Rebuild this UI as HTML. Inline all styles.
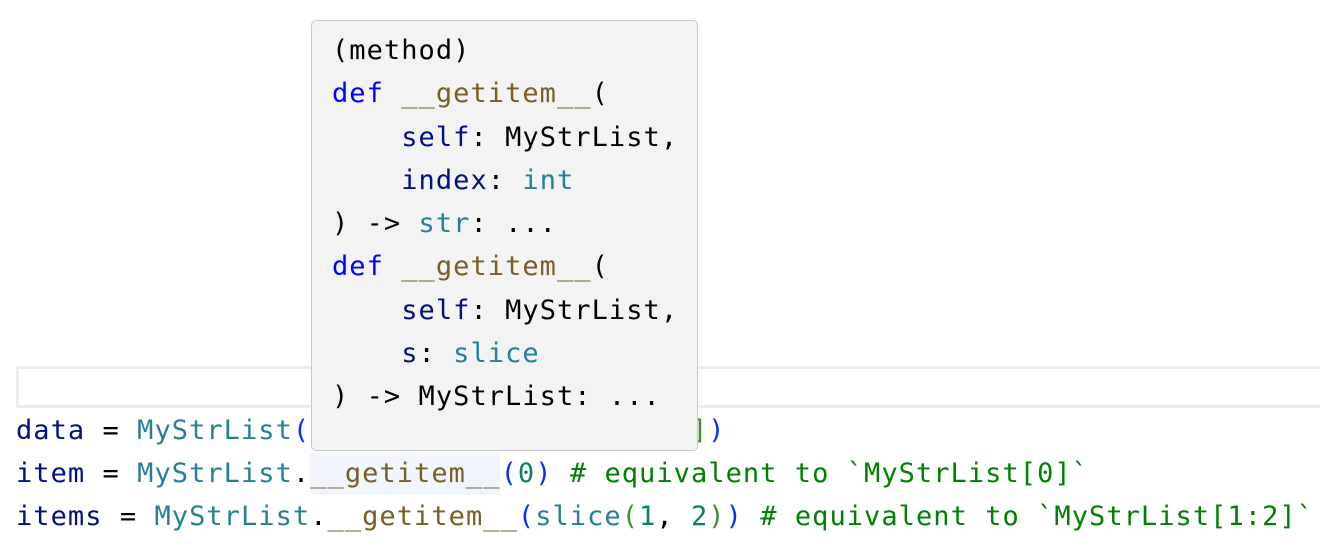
<!DOCTYPE html>
<html><head><style>
body{margin:0;width:1320px;height:556px;background:#fff;overflow:hidden;position:relative;font-family:"DejaVu Sans Mono","Liberation Mono",monospace;font-size:27px;letter-spacing:1.05px;}
.l{position:absolute;white-space:pre;line-height:43px;}
.v{color:#001080}.c{color:#267f99}.f{color:#795e26}.k{color:#0000ff}.n{color:#098658}.g{color:#008000}.b{color:#0431fa}.p{color:#319331}
#box{position:absolute;left:16px;top:366px;width:1310px;height:36px;border:3px solid #ececec;border-right:none}
#tip{position:absolute;left:311px;top:20px;width:385px;height:429px;background:#f3f3f3;border:1.5px solid #c8c8c8;border-radius:5px}
#hl{position:absolute;left:310px;top:453px;width:190px;height:42px;background:#f1f6fd}
</style></head><body>
<div id="box"></div>
<div id="hl"></div>
<div class="l" style="left:16px;top:409px"><span class="v">data</span> = <span class="c">MyStrList</span><span class="b">(</span>                      <span class="p">]</span><span class="b">)</span></div>
<div class="l" style="left:16px;top:452px"><span class="v">item</span> = <span class="c">MyStrList</span>.<span class="f">__getitem__</span><span class="b">(</span><span class="n">0</span><span class="b">)</span> <span class="g"># equivalent to `MyStrList[0]`</span></div>
<div class="l" style="left:16px;top:495px"><span class="v">items</span> = <span class="c">MyStrList</span>.<span class="f">__getitem__</span><span class="b">(</span><span class="c">slice</span><span class="p">(</span><span class="n">1</span>, <span class="n">2</span><span class="p">)</span><span class="b">)</span> <span class="g"># equivalent to `MyStrList[1:2]`</span></div>
<div id="tip"></div>
<div class="l" style="left:332px;top:29px;line-height:43.3px">(method)
<span class="k">def</span> <span class="f">__getitem__</span>(
    <span class="v">self</span>: MyStrList,
    <span class="v">index</span>: <span class="c">int</span>
) -&gt; <span class="c">str</span>: ...
<span class="k">def</span> <span class="f">__getitem__</span>(
    <span class="v">self</span>: MyStrList,
    <span class="v">s</span>: <span class="c">slice</span>
) -&gt; MyStrList: ...</div>
</body></html>
